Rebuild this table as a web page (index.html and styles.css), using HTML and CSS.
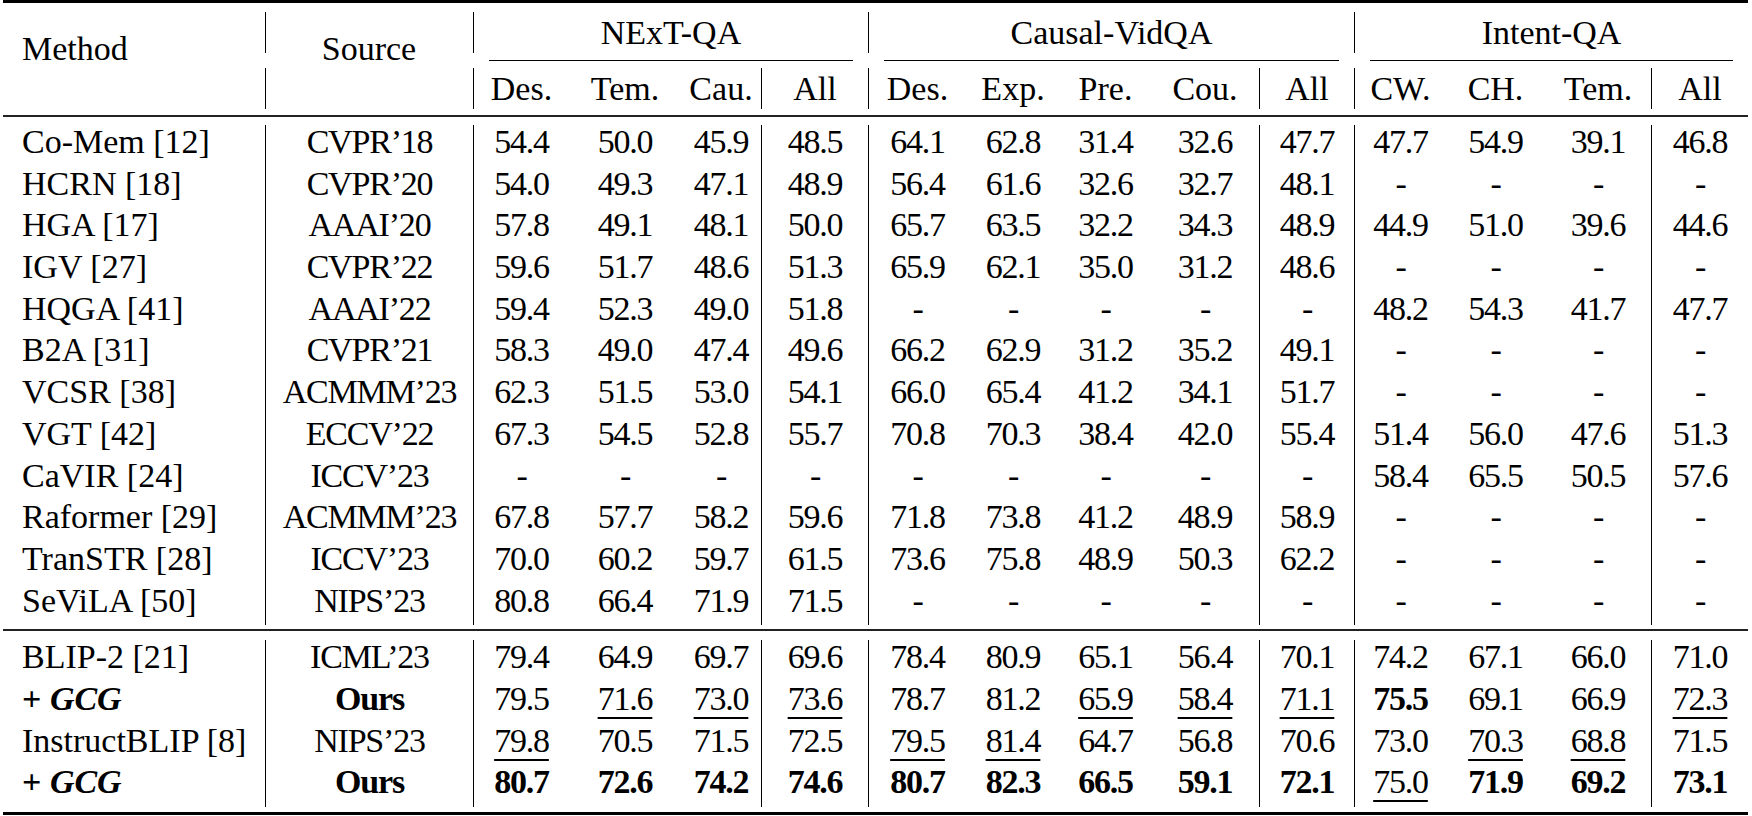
FILE: index.html
```html
<!DOCTYPE html>
<html lang="en">
<head>
<meta charset="utf-8">
<title>Results</title>
<link rel="stylesheet" href="styles.css">
</head>
<body>
<table class="results">
<colgroup>
<col class="w-method"><col class="w-source">
<col class="w-n1"><col class="w-n2"><col class="w-n3"><col class="w-n4">
<col class="w-c1"><col class="w-c2"><col class="w-c3"><col class="w-c4"><col class="w-c5">
<col class="w-i1"><col class="w-i2"><col class="w-i3"><col class="w-i4">
</colgroup>
<thead>
<tr class="gap-top"><td colspan="15"></td></tr>
<tr class="head">
<td class="name meth" rowspan="3">Method</td>
<td class="name src-head" rowspan="3">Source</td>
<td class="v" colspan="4">NExT-QA</td>
<td class="v" colspan="5">Causal-VidQA</td>
<td class="v" colspan="4">Intent-QA</td>
</tr>
<tr class="cmid">
<td colspan="4"><div class="cline"></div></td>
<td colspan="5"><div class="cline"></div></td>
<td colspan="4"><div class="cline"></div></td>
</tr>
<tr class="head">
<td class="v">Des.</td><td>Tem.</td><td>Cau.</td><td class="v">All</td>
<td class="v">Des.</td><td>Exp.</td><td>Pre.</td><td>Cou.</td><td class="v">All</td>
<td class="v">CW.</td><td>CH.</td><td>Tem.</td><td class="v">All</td>
</tr>
<tr class="rule-mid"><td colspan="15"><div class="hline"></div></td></tr>
</thead>
<tbody>
<tr class="data">
<td class="meth">Co-Mem [12]</td><td class="v">CVPR’18</td>
<td class="v">54.4</td><td>50.0</td><td>45.9</td><td class="v">48.5</td>
<td class="v">64.1</td><td>62.8</td><td>31.4</td><td>32.6</td><td class="v">47.7</td>
<td class="v">47.7</td><td>54.9</td><td>39.1</td><td class="v">46.8</td>
</tr>
<tr class="data">
<td class="meth">HCRN [18]</td><td class="v">CVPR’20</td>
<td class="v">54.0</td><td>49.3</td><td>47.1</td><td class="v">48.9</td>
<td class="v">56.4</td><td>61.6</td><td>32.6</td><td>32.7</td><td class="v">48.1</td>
<td class="v">-</td><td>-</td><td>-</td><td class="v">-</td>
</tr>
<tr class="data">
<td class="meth">HGA [17]</td><td class="v">AAAI’20</td>
<td class="v">57.8</td><td>49.1</td><td>48.1</td><td class="v">50.0</td>
<td class="v">65.7</td><td>63.5</td><td>32.2</td><td>34.3</td><td class="v">48.9</td>
<td class="v">44.9</td><td>51.0</td><td>39.6</td><td class="v">44.6</td>
</tr>
<tr class="data">
<td class="meth">IGV [27]</td><td class="v">CVPR’22</td>
<td class="v">59.6</td><td>51.7</td><td>48.6</td><td class="v">51.3</td>
<td class="v">65.9</td><td>62.1</td><td>35.0</td><td>31.2</td><td class="v">48.6</td>
<td class="v">-</td><td>-</td><td>-</td><td class="v">-</td>
</tr>
<tr class="data">
<td class="meth">HQGA [41]</td><td class="v">AAAI’22</td>
<td class="v">59.4</td><td>52.3</td><td>49.0</td><td class="v">51.8</td>
<td class="v">-</td><td>-</td><td>-</td><td>-</td><td class="v">-</td>
<td class="v">48.2</td><td>54.3</td><td>41.7</td><td class="v">47.7</td>
</tr>
<tr class="data">
<td class="meth">B2A [31]</td><td class="v">CVPR’21</td>
<td class="v">58.3</td><td>49.0</td><td>47.4</td><td class="v">49.6</td>
<td class="v">66.2</td><td>62.9</td><td>31.2</td><td>35.2</td><td class="v">49.1</td>
<td class="v">-</td><td>-</td><td>-</td><td class="v">-</td>
</tr>
<tr class="data">
<td class="meth">VCSR [38]</td><td class="v">ACMMM’23</td>
<td class="v">62.3</td><td>51.5</td><td>53.0</td><td class="v">54.1</td>
<td class="v">66.0</td><td>65.4</td><td>41.2</td><td>34.1</td><td class="v">51.7</td>
<td class="v">-</td><td>-</td><td>-</td><td class="v">-</td>
</tr>
<tr class="data">
<td class="meth">VGT [42]</td><td class="v">ECCV’22</td>
<td class="v">67.3</td><td>54.5</td><td>52.8</td><td class="v">55.7</td>
<td class="v">70.8</td><td>70.3</td><td>38.4</td><td>42.0</td><td class="v">55.4</td>
<td class="v">51.4</td><td>56.0</td><td>47.6</td><td class="v">51.3</td>
</tr>
<tr class="data">
<td class="meth">CaVIR [24]</td><td class="v">ICCV’23</td>
<td class="v">-</td><td>-</td><td>-</td><td class="v">-</td>
<td class="v">-</td><td>-</td><td>-</td><td>-</td><td class="v">-</td>
<td class="v">58.4</td><td>65.5</td><td>50.5</td><td class="v">57.6</td>
</tr>
<tr class="data">
<td class="meth">Raformer [29]</td><td class="v">ACMMM’23</td>
<td class="v">67.8</td><td>57.7</td><td>58.2</td><td class="v">59.6</td>
<td class="v">71.8</td><td>73.8</td><td>41.2</td><td>48.9</td><td class="v">58.9</td>
<td class="v">-</td><td>-</td><td>-</td><td class="v">-</td>
</tr>
<tr class="data">
<td class="meth">TranSTR [28]</td><td class="v">ICCV’23</td>
<td class="v">70.0</td><td>60.2</td><td>59.7</td><td class="v">61.5</td>
<td class="v">73.6</td><td>75.8</td><td>48.9</td><td>50.3</td><td class="v">62.2</td>
<td class="v">-</td><td>-</td><td>-</td><td class="v">-</td>
</tr>
<tr class="data">
<td class="meth">SeViLA [50]</td><td class="v">NIPS’23</td>
<td class="v">80.8</td><td>66.4</td><td>71.9</td><td class="v">71.5</td>
<td class="v">-</td><td>-</td><td>-</td><td>-</td><td class="v">-</td>
<td class="v">-</td><td>-</td><td>-</td><td class="v">-</td>
</tr>
<tr class="rule-sec"><td colspan="15"><div class="hline"></div></td></tr>
<tr class="data">
<td class="meth">BLIP-2 [21]</td><td class="v">ICML’23</td>
<td class="v">79.4</td><td>64.9</td><td>69.7</td><td class="v">69.6</td>
<td class="v">78.4</td><td>80.9</td><td>65.1</td><td>56.4</td><td class="v">70.1</td>
<td class="v">74.2</td><td>67.1</td><td>66.0</td><td class="v">71.0</td>
</tr>
<tr class="data">
<td class="meth b">+ <i>GCG</i></td><td class="v b">Ours</td>
<td class="v">79.5</td><td><span class="u">71.6</span></td><td><span class="u">73.0</span></td><td class="v"><span class="u">73.6</span></td>
<td class="v">78.7</td><td>81.2</td><td><span class="u">65.9</span></td><td><span class="u">58.4</span></td><td class="v"><span class="u">71.1</span></td>
<td class="v b">75.5</td><td>69.1</td><td>66.9</td><td class="v"><span class="u">72.3</span></td>
</tr>
<tr class="data">
<td class="meth">InstructBLIP [8]</td><td class="v">NIPS’23</td>
<td class="v"><span class="u">79.8</span></td><td>70.5</td><td>71.5</td><td class="v">72.5</td>
<td class="v"><span class="u">79.5</span></td><td><span class="u">81.4</span></td><td>64.7</td><td>56.8</td><td class="v">70.6</td>
<td class="v">73.0</td><td><span class="u">70.3</span></td><td><span class="u">68.8</span></td><td class="v">71.5</td>
</tr>
<tr class="data">
<td class="meth b">+ <i>GCG</i></td><td class="v b">Ours</td>
<td class="v b">80.7</td><td class="b">72.6</td><td class="b">74.2</td><td class="v b">74.6</td>
<td class="v b">80.7</td><td class="b">82.3</td><td class="b">66.5</td><td class="b">59.1</td><td class="v b">72.1</td>
<td class="v"><span class="u">75.0</span></td><td class="b">71.9</td><td class="b">69.2</td><td class="v b">73.1</td>
</tr>
<tr class="gap-bottom"><td colspan="15"></td></tr>
</tbody>
</table>
</body>
</html>
```

FILE: styles.css
```css
html, body {
  margin: 0;
  padding: 0;
  background: #fff;
}

body {
  font-family: "Liberation Serif", "Times New Roman", serif;
  color: #000;
}

.results {
  margin: 0 0 0 3px;
  width: 1745px;
  table-layout: fixed;
  border-collapse: separate;
  border-spacing: 0;
  border-top: 3px solid #000;
  border-bottom: 3px solid #000;
  font-size: 34px;
}

.w-method { width: 262px; }
.w-source { width: 208px; }
.w-n1 { width: 96px; }
.w-n2 { width: 112px; }
.w-n3 { width: 80px; }
.w-n4 { width: 107px; }
.w-c1 { width: 98px; }
.w-c2 { width: 94px; }
.w-c3 { width: 91px; }
.w-c4 { width: 108px; }
.w-c5 { width: 95px; }
.w-i1 { width: 92px; }
.w-i2 { width: 99px; }
.w-i3 { width: 106px; }
.w-i4 { width: 97px; }

.results td {
  padding: 0;
  text-align: center;
  white-space: nowrap;
}

.results td.v {
  border-left: 1px solid #000;
}

.results td.meth {
  text-align: left;
  padding-left: 19px;
}

.results td.b {
  font-weight: bold;
}

.gap-top td {
  height: 9px;
}

.head td {
  height: 41px;
  line-height: 41px;
}

.results td.name {
  vertical-align: top;
  padding-top: 16px;
}

.results td.src-head {
  background:
    linear-gradient(#000, #000) left top / 1px 41px no-repeat,
    linear-gradient(#000, #000) left bottom / 1px 41px no-repeat;
}

.cmid td {
  height: 15px;
  vertical-align: top;
}

.cline {
  height: 1px;
  margin: 7px 15px 0 16px;
  background: #000;
}

.rule-mid td {
  padding: 6px 0 8px;
}

.rule-sec td {
  padding: 4px 0 9px;
}

.hline {
  height: 2px;
  background: #222;
}

.data td {
  line-height: 34px;
  padding: 0 0 7.7px;
}

.data td:nth-child(2) {
  letter-spacing: -1.2px;
}

.data td:nth-child(n+3) {
  letter-spacing: -1.2px;
}

.u {
  text-decoration: underline;
  text-decoration-thickness: 1.5px;
  text-underline-offset: 7px;
}

.gap-bottom td {
  height: 5px;
}
```
